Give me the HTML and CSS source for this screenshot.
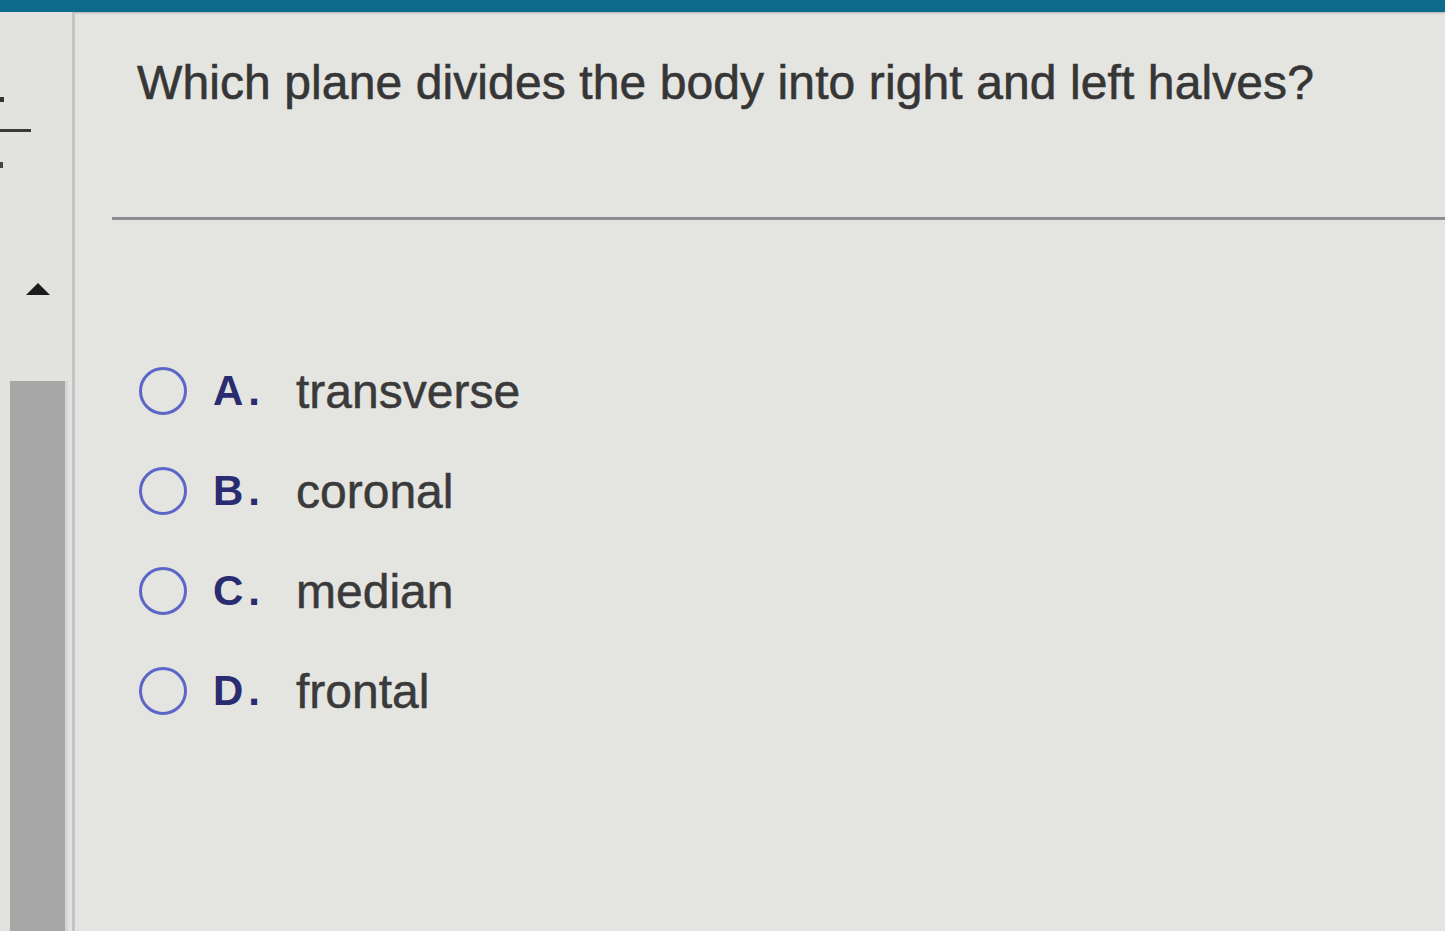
FILE: index.html
```html
<!DOCTYPE html>
<html>
<head>
<meta charset="utf-8">
<link rel="stylesheet" href="styles.css">
</head>
<body>
<div class="topbar"></div>
<div class="layout">
  <aside class="sidebar">
    <div class="marks">
      <span class="mark-dot"></span>
      <span class="mark-dash"></span>
      <span class="mark-dot2"></span>
    </div>
    <div class="scroll">
      <svg class="arrow" width="26" height="14" viewBox="0 0 26 14"><polygon points="13,1 25,13 1,13" fill="#1c1c1e"/></svg>
      <div class="thumb"></div>
    </div>
  </aside>
  <main class="main">
    <h1 class="question">Which plane divides the body into right and left halves?</h1>
    <div class="rule"></div>
    <ul class="options">
      <li class="option"><span class="radio"></span><span class="letter">A.</span><span class="answer">transverse</span></li>
      <li class="option"><span class="radio"></span><span class="letter">B.</span><span class="answer">coronal</span></li>
      <li class="option"><span class="radio"></span><span class="letter">C.</span><span class="answer">median</span></li>
      <li class="option"><span class="radio"></span><span class="letter">D.</span><span class="answer">frontal</span></li>
    </ul>
  </main>
</div>
</body>
</html>
```
FILE: styles.css
```css
html, body {
  margin: 0;
  padding: 0;
  height: 100%;
  overflow: hidden;
}
body {
  background: #e4e4e0;
  font-family: "Liberation Sans", Arial, sans-serif;
  display: flex;
  flex-direction: column;
}
.topbar {
  height: 12px;
  background: #0d6a8a;
  flex: none;
  box-shadow: 0 1px 2px rgba(0,0,0,0.25);
}
.layout {
  flex: 1;
  display: flex;
  min-height: 0;
}
.sidebar {
  width: 72px;
  flex: none;
  border-right: 3px solid #c4c4c6;
  background: #e2e2de;
  display: flex;
  flex-direction: column;
}
.marks {
  height: 240px;
  position: relative;
}
.mark-dot {
  position: absolute;
  left: 0; top: 85px;
  width: 4px; height: 5px;
  background: #333;
}
.mark-dash {
  position: absolute;
  left: 0; top: 117px;
  width: 31px; height: 3px;
  background: #3a3a3c;
}
.mark-dot2 {
  position: absolute;
  left: 0; top: 150px;
  width: 3px; height: 6px;
  background: #444;
}
.scroll {
  flex: 1;
  display: flex;
  flex-direction: column;
  align-items: flex-start;
}
.arrow {
  margin-top: 30px;
  margin-left: 25px;
}
.thumb {
  margin-top: 85px;
  flex: 1;
  width: 55px;
  margin-left: 10px;
  background: #a7a7a8;
  border-right: 3px solid #d6d6d8;
}
.main {
  flex: 1;
  padding-left: 37px;
}
.question {
  margin: 42px 0 0 25px;
  font-size: 48px;
  font-weight: normal;
  color: #363636;
  -webkit-text-stroke: 0.6px #363636;
  letter-spacing: 0.1px;
  line-height: 58px;
}
.rule {
  margin-top: 105px;
  height: 3px;
  background: #8c8c92;
}
.options {
  list-style: none;
  margin: 142px 0 0 0;
  padding: 0;
  display: flex;
  flex-direction: column;
  gap: 42px;
}
.option {
  display: flex;
  align-items: center;
  height: 58px;
  margin-left: 27px;
}
.radio {
  width: 48px;
  height: 48px;
  border: 3.5px solid #5c66c8;
  border-radius: 50%;
  box-sizing: border-box;
  flex: none;
}
.letter {
  margin-left: 26px;
  width: 83px;
  font-size: 42px;
  font-weight: bold;
  letter-spacing: 5px;
  color: #2a2c72;
}
.answer {
  font-size: 48px;
  color: #3a3a3a;
  -webkit-text-stroke: 0.5px #3a3a3a;
}
```
